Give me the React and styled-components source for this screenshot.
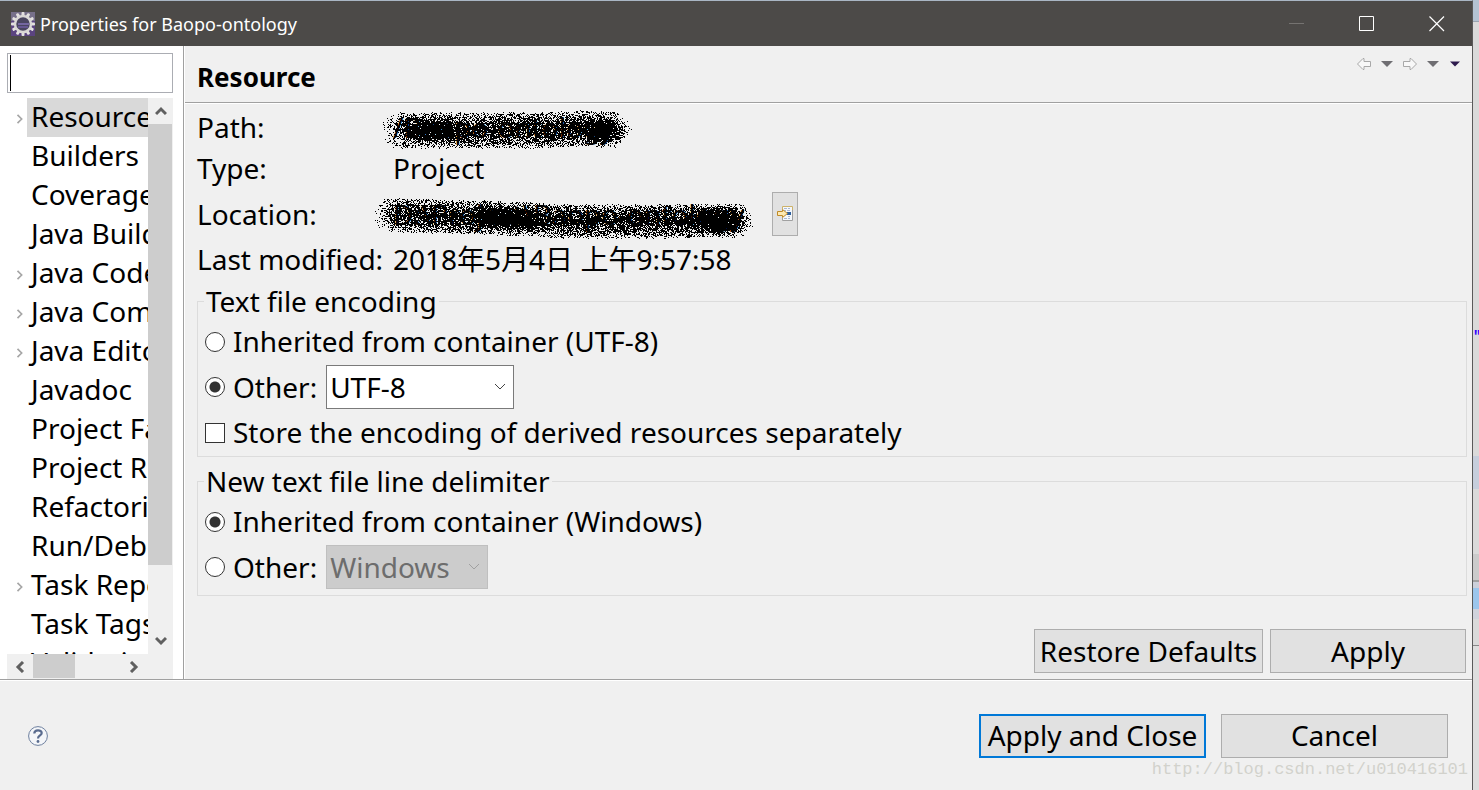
import { useState } from "react";
import styled, { createGlobalStyle } from "styled-components";

const TREE = [
  { name: "Resource", expandable: true },
  { name: "Builders" },
  { name: "Coverage" },
  { name: "Java Build Path" },
  { name: "Java Code Style", expandable: true },
  { name: "Java Compiler", expandable: true },
  { name: "Java Editor", expandable: true },
  { name: "Javadoc" },
  { name: "Project Facets" },
  { name: "Project References" },
  { name: "Refactoring History" },
  { name: "Run/Debug Settings" },
  { name: "Task Repository", expandable: true },
  { name: "Task Tags" },
  { name: "Validation" },
];

// small seeded generator so the spray looks the same on every render
function random(seed) {
  let s = seed;
  return () => {
    s = (s * 1664525 + 1013904223) % 4294967296;
    return s / 4294967296;
  };
}

// one long path of 1px specks, dense in the middle and thin at the edge
function sprayPath(stroke, radius, seed) {
  const next = random(seed);
  let d = "";
  for (let i = 0; i < stroke.length - 1; i++) {
    const [x1, y1] = stroke[i];
    const [x2, y2] = stroke[i + 1];
    const count = Math.round(Math.abs(x2 - x1) * 38);
    for (let n = 0; n < count; n++) {
      const t = next();
      const angle = next() * Math.PI * 2;
      const r = radius * Math.pow(next(), 0.7);
      const x = Math.round(x1 + (x2 - x1) * t + Math.cos(angle) * r);
      const y = Math.round(y1 + (y2 - y1) * t + Math.sin(angle) * r);
      d += `M${x} ${y}h1v1h-1z`;
    }
  }
  return d;
}

const PATH_SPRAY =
  sprayPath([[17, 20], [70, 20], [150, 20], [200, 18], [232, 19]], 18, 7) +
  sprayPath([[36, 19], [70, 20]], 10, 3) +
  sprayPath([[205, 20], [236, 20]], 12, 5);
const LOCATION_SPRAY =
  sprayPath([[18, 18], [110, 20], [200, 24], [290, 24], [366, 23]], 17, 21) +
  sprayPath([[110, 20], [160, 22]], 11, 9) +
  sprayPath([[325, 22], [368, 23]], 13, 13);

function Chevron({ direction, color = "#606060", size = 12, weight = 3 }) {
  const paths = {
    up: "M1 9l5-5 5 5",
    down: "M1 3l5 5 5-5",
    left: "M9 1L4 6l5 5",
    right: "M3 1l5 5-5 5",
  };
  return (
    <svg width={size} height={size} viewBox="0 0 12 12" fill="none" stroke={color} strokeWidth={weight}>
      <path d={paths[direction]} />
    </svg>
  );
}

function AppIcon() {
  const teeth = Array.from({ length: 12 }, (_, i) => i * 30);
  return (
    <svg width="24" height="24" viewBox="0 0 24 24">
      <rect width="24" height="24" fill="#5b4480" />
      <rect width="24" height="9" fill="#77708a" />
      {teeth.map((a) => (
        <rect key={a} x="10.500" y="0" width="3" height="5" rx="1" fill="#e4e2e0" transform={`rotate(${a} 12 12)`} />
      ))}
      <circle cx="12" cy="12" r="8" fill="#4a4560" stroke="#dad8d6" strokeWidth="2.500" />
      <path d="M7 12h11" stroke="#7466a0" strokeWidth="2" />
      <path d="M7 15h10" stroke="#655690" strokeWidth="2" />
    </svg>
  );
}

function NavArrow({ flip }) {
  return (
    <svg width="16" height="14" viewBox="0 0 16 14">
      <path
        d="M1.500 7L7 1.500h1V4.500h6.500v5H8v3H7z"
        fill="#f8f8f8"
        stroke="#a8a8a8"
        transform={flip ? "translate(16 0) scale(-1 1)" : undefined}
      />
    </svg>
  );
}

function Triangle({ color, width = 12 }) {
  return (
    <svg width={width} height="6" viewBox="0 0 12 6">
      <path d="M0 0h12L6 6z" fill={color} />
    </svg>
  );
}

function ShowInIcon() {
  return (
    <svg width="18" height="18" viewBox="0 0 18 18">
      <path d="M6.500 1.500h10v14h-10z" fill="#f4f7fb" />
      <path d="M6.500 4V1.500h10V5" fill="none" stroke="#cdb26a" />
      <path d="M16.500 5v10.500h-10V13" fill="none" stroke="#a0a0a0" />
      <path d="M8 3.500h3M12 3.500h2M8 5.500h2M11 5.500h3M8 13.500h3M12 13.500h2M12 11.500h2" stroke="#a9b8d2" />
      <path d="M11 8.500h4" stroke="#2d5f9e" strokeWidth="3" />
      <path d="M1.500 6.500h5v-2l5 4-5 4v-2h-5z" fill="#fce9b2" stroke="#c08a26" />
    </svg>
  );
}

function HelpIcon() {
  return (
    <svg width="20" height="20" viewBox="0 0 20 20" fill="none">
      <circle cx="10" cy="10" r="9.400" fill="#f4f6f9" stroke="#6d7f9e" />
      <path d="M6.300 7.500c0-4.200 7.400-4.200 7.400-.4 0 2.400-3.700 2.400-3.700 5.400" stroke="#5a6c8f" strokeWidth="2.200" />
      <circle cx="10" cy="15.500" r="1.400" fill="#5a6c8f" />
    </svg>
  );
}

function TitleBar() {
  return (
    <Title>
      <AppIcon />
      <TitleText>Properties for Baopo-ontology</TitleText>
      <WindowButton aria-label="Minimize" disabled>
        <svg width="16" height="16" stroke="#757371">
          <path d="M0 7.500h15" />
        </svg>
      </WindowButton>
      <WindowButton aria-label="Maximize">
        <svg width="16" height="16" fill="none" stroke="#ffffff">
          <path d="M.5.5h14v14H.5z" />
        </svg>
      </WindowButton>
      <WindowButton aria-label="Close">
        <svg width="16" height="16" stroke="#ffffff" strokeWidth="1.200">
          <path d="M.5.5l14.500 14.500M15 .5L.5 15" />
        </svg>
      </WindowButton>
    </Title>
  );
}

function Sidebar() {
  const [selected, setSelected] = useState("Resource");
  return (
    <Side>
      <FilterInput aria-label="Filter" placeholder=" " />
      <TreeBox>
        <TreeList>
          {TREE.map((item) => (
            <TreeRow key={item.name}>
              <Twisty>{item.expandable && <Chevron direction="right" color="#a6a6a6" size={10} weight={2} />}</Twisty>
              <TreeButton $active={item.name === selected} onClick={() => setSelected(item.name)}>
                {item.name}
              </TreeButton>
            </TreeRow>
          ))}
        </TreeList>
        <VerticalBar>
          <ScrollButton aria-label="Scroll up">
            <Chevron direction="up" />
          </ScrollButton>
          <VerticalTrack>
            <VerticalThumb />
          </VerticalTrack>
          <ScrollButton aria-label="Scroll down">
            <Chevron direction="down" />
          </ScrollButton>
        </VerticalBar>
        <HorizontalBar>
          <ScrollButton aria-label="Scroll left">
            <Chevron direction="left" />
          </ScrollButton>
          <HorizontalTrack>
            <HorizontalThumb />
          </HorizontalTrack>
          <ScrollButton aria-label="Scroll right">
            <Chevron direction="right" />
          </ScrollButton>
        </HorizontalBar>
      </TreeBox>
    </Side>
  );
}

function ResourcePage() {
  const [encoding, setEncoding] = useState("other");
  const [delimiter, setDelimiter] = useState("inherited");
  return (
    <Main>
      <PageHeader>
        <PageTitle>Resource</PageTitle>
        <HistoryBar>
          <ToolButton aria-label="Back"><NavArrow /></ToolButton>
          <ToolButton aria-label="Back history"><Triangle color="#6f6e72" /></ToolButton>
          <ToolButton aria-label="Forward"><NavArrow flip /></ToolButton>
          <ToolButton aria-label="Forward history"><Triangle color="#6f6e72" /></ToolButton>
          <ToolButton aria-label="Menu"><Triangle color="#2d1a4d" width={10} /></ToolButton>
        </HistoryBar>
      </PageHeader>

      <Content>
        <Info>
          <dt>Path:</dt>
          <dd>
            <Redacted>
              /Baopo-ontology
              <Spray width="260" height="40">
                <path d={PATH_SPRAY} />
              </Spray>
            </Redacted>
          </dd>
          <dt>Type:</dt>
          <dd>Project</dd>
          <dt>Location:</dt>
          <LocationValue>
            <Redacted>
              D:\Project\Baopo-ontology
              <Spray width="400" height="40" $wide>
                <path d={LOCATION_SPRAY} />
              </Spray>
            </Redacted>
            <ShowButton aria-label="Show in system explorer">
              <ShowInIcon />
            </ShowButton>
          </LocationValue>
          <dt>Last modified:</dt>
          <dd>2018年5月4日 上午9:57:58</dd>
        </Info>

        <Group>
          <legend>Text file encoding</legend>
          <Option>
            <Radio type="radio" name="encoding" checked={encoding === "inherited"} onChange={() => setEncoding("inherited")} />
            Inherited from container (UTF-8)
          </Option>
          <OptionRow>
            <Option>
              <Radio type="radio" name="encoding" checked={encoding === "other"} onChange={() => setEncoding("other")} />
              Other:
            </Option>
            <SelectBox $width="188px">
              <select aria-label="Text file encoding" disabled={encoding !== "other"} defaultValue="UTF-8">
                <option>UTF-8</option>
                <option>UTF-16</option>
                <option>US-ASCII</option>
              </select>
              <Chevron direction="down" color="#444444" weight={1} />
            </SelectBox>
          </OptionRow>
          <Option>
            <Check type="checkbox" />
            Store the encoding of derived resources separately
          </Option>
        </Group>

        <Group>
          <legend>New text file line delimiter</legend>
          <Option>
            <Radio type="radio" name="delimiter" checked={delimiter === "inherited"} onChange={() => setDelimiter("inherited")} />
            Inherited from container (Windows)
          </Option>
          <OptionRow>
            <Option>
              <Radio type="radio" name="delimiter" checked={delimiter === "other"} onChange={() => setDelimiter("other")} />
              Other:
            </Option>
            <SelectBox $width="162px">
              <select aria-label="Line delimiter" disabled={delimiter !== "other"} defaultValue="Windows">
                <option>Windows</option>
                <option>Unix</option>
              </select>
              <Chevron direction="down" color="#a0a0a0" weight={1} />
            </SelectBox>
          </OptionRow>
        </Group>

        <PageActions>
          <PushButton $width="229px">Restore Defaults</PushButton>
          <PushButton $width="196px">Apply</PushButton>
        </PageActions>
      </Content>
    </Main>
  );
}

export default function App() {
  return (
    <>
      <GlobalStyle />
      <Desktop>
        <Dialog>
          <TitleBar />
          <Body>
            <Sidebar />
            <ResourcePage />
          </Body>
          <Footer>
            <HelpButton aria-label="Help">
              <HelpIcon />
            </HelpButton>
            <PushButton $width="227px" $primary>Apply and Close</PushButton>
            <PushButton $width="227px">Cancel</PushButton>
            <Watermark>http://blog.csdn.net/u010416101</Watermark>
          </Footer>
        </Dialog>
        <Backdrop>
          <CodeBit>"</CodeBit>
        </Backdrop>
      </Desktop>
    </>
  );
}

// Styled Components

const GlobalStyle = createGlobalStyle`
  * {
    box-sizing: border-box;
  }
  body {
    margin: 0;
    font-family: "Noto Sans", "Noto Sans CJK SC", sans-serif;
    font-size: 28px;
    line-height: 35px;
    color: #000000;
  }
  button, input, select {
    font: inherit;
    color: inherit;
    margin: 0;
    padding: 0;
    border-radius: 0;
    outline: none;
  }
  svg {
    display: block;
    flex-shrink: 0;
  }
`;

const Desktop = styled.div`
  display: flex;
  height: 100vh;
  overflow: hidden;
`;

const Dialog = styled.div`
  flex: 1;
  min-width: 0;
  display: flex;
  flex-direction: column;
  background-color: #f0f0f0;
  border-top: 1px solid #a9b6c4;
  border-right: 1px solid #5a5a5a;
`;

const Backdrop = styled.div`
  width: 6px;
  padding-top: 328px;
  overflow: hidden;
  background: linear-gradient(
    #b4c3d3 0 21px,
    #9aa4b0 21px 22px,
    #dadada 22px 456px,
    #c6cedc 456px 489px,
    #dadada 489px 554px,
    #cbcbcb 554px 580px,
    #a0a0a0 580px 582px,
    #ccd0da 582px 588px,
    #9cc6ec 588px 609px,
    #d0d3dc 609px 619px,
    #dadada 619px 645px,
    #888888 645px 646px,
    #dedede 646px
  );
`;

const CodeBit = styled.span`
  display: block;
  font-family: "Liberation Mono", monospace;
  font-size: 14px;
  font-weight: 700;
  line-height: 18px;
  color: #2a00ff;
`;

const Title = styled.header`
  height: 45px;
  flex-shrink: 0;
  display: flex;
  align-items: center;
  padding-left: 11px;
  background-color: #4c4a48;
  color: #ffffff;
`;

const TitleText = styled.h1`
  flex: 1;
  margin: 0;
  padding-left: 5px;
  font-size: 18px;
  font-weight: 400;
  line-height: 24px;
`;

const WindowButton = styled.button`
  width: 70px;
  height: 45px;
  display: flex;
  align-items: center;
  justify-content: center;
  border: none;
  background: none;
`;

const Body = styled.div`
  flex: 1;
  min-height: 0;
  display: flex;
  border-bottom: 1px solid #a0a0a0;
`;

const Side = styled.nav`
  width: 184px;
  flex-shrink: 0;
  display: flex;
  flex-direction: column;
  gap: 5px;
  padding: 7px 10px 0 7px;
  background-color: #ffffff;
  border-right: 1px solid #a0a0a0;
`;

const FilterInput = styled.input`
  width: 100%;
  height: 40px;
  padding: 0 2px;
  background-color: #ffffff;
  border: 1px solid #abadb3;

  /* resting caret while the filter is empty */
  &:placeholder-shown {
    background: linear-gradient(#000000, #000000) 2px 1px / 1px 36px no-repeat #ffffff;
    caret-color: transparent;
  }
`;

const TreeBox = styled.div`
  flex: 1;
  min-height: 0;
  display: grid;
  grid-template-columns: minmax(0, 1fr) 25px;
  grid-template-rows: minmax(0, 1fr) 25px;
`;

const TreeList = styled.ul`
  margin: 0;
  padding: 0;
  list-style: none;
  overflow: hidden;
`;

const TreeRow = styled.li`
  display: flex;
  height: 39px;
`;

const Twisty = styled.span`
  width: 20px;
  flex-shrink: 0;
  display: flex;
  align-items: center;
  justify-content: flex-end;
  padding: 3px 2px 0 0;
`;

const TreeButton = styled.button`
  padding: 0 4px 2px;
  border: none;
  background-color: ${(props) => (props.$active ? "#d9d9d9" : "transparent")};
  white-space: nowrap;
`;

const VerticalBar = styled.div`
  display: flex;
  flex-direction: column;
  background-color: #f0f0f0;
`;

const HorizontalBar = styled.div`
  grid-column: 1 / 3;
  display: flex;
  padding-right: 26px;
  background-color: #f0f0f0;
`;

const ScrollButton = styled.button`
  width: 26px;
  height: 26px;
  display: flex;
  align-items: center;
  justify-content: center;
  border: none;
  background: none;
`;

const VerticalTrack = styled.div`
  flex: 1;
  display: grid;
  grid-template-rows: 7fr 1fr;
`;

const VerticalThumb = styled.div`
  width: 24px;
  background-color: #cdcdcd;
`;

const HorizontalTrack = styled.div`
  flex: 1;
`;

const HorizontalThumb = styled.div`
  width: 42px;
  height: 24px;
  background-color: #cdcdcd;
`;

const Main = styled.main`
  flex: 1;
  min-width: 0;
  display: flex;
  flex-direction: column;
  border-left: 1px solid #ffffff;
`;

const PageHeader = styled.div`
  display: flex;
  justify-content: space-between;
  align-items: flex-start;
  height: 57px;
  padding: 10px 10px 0 12px;
  border-bottom: 1px solid #a0a0a0;
  box-shadow: 0 1px 0 #ffffff;
`;

const PageTitle = styled.h2`
  margin: 0;
  padding-top: 3px;
  font-size: 26px;
  font-weight: 700;
  line-height: 36px;
`;

const HistoryBar = styled.div`
  display: flex;
  align-items: center;
  gap: 8px;
`;

const ToolButton = styled.button`
  min-width: 14px;
  height: 16px;
  display: flex;
  align-items: center;
  justify-content: center;
  border: none;
  background: none;
`;

const Content = styled.div`
  flex: 1;
  display: flex;
  flex-direction: column;
  padding: 7px 5px 6px 12px;
`;

const Info = styled.dl`
  display: grid;
  grid-template-columns: 196px 1fr;
  row-gap: 6px;
  align-items: center;
  margin: 0 0 7px;
  white-space: nowrap;

  dd {
    margin: 0;
  }
`;

const LocationValue = styled.dd`
  display: flex;
  align-items: center;
  gap: 28px;
`;

const Redacted = styled.span`
  position: relative;
  display: block;
  width: fit-content;
`;

/* lies over the text it hides */
const Spray = styled.svg`
  position: absolute;
  top: 0;
  left: ${(props) => (props.$wide ? "-22px" : "-12px")};
  overflow: visible;
`;

const ShowButton = styled.button`
  width: 26px;
  height: 44px;
  display: flex;
  align-items: center;
  justify-content: center;
  border: 1px solid #adadad;
  background-color: #e1e1e1;
`;

const Group = styled.fieldset`
  display: flex;
  flex-direction: column;
  gap: 6px;
  margin: 0 0 7px;
  padding: 5px 7px 6px;
  min-width: 0;
  border: 1px solid #dcdcdc;

  legend {
    margin-left: -1px;
    padding: 0 2px;
  }
`;

const Option = styled.label`
  display: flex;
  align-items: center;
  gap: 8px;
`;

const OptionRow = styled.div`
  display: flex;
  align-items: center;
  gap: 9px;
`;

const Radio = styled.input`
  appearance: none;
  width: 20px;
  height: 20px;
  border: 1px solid #333333;
  border-radius: 50%;
  background-color: #ffffff;

  &:checked {
    background-image: radial-gradient(circle, #333333 0 5px, #ffffff 6px);
  }
`;

const Check = styled.input`
  appearance: none;
  width: 20px;
  height: 20px;
  border: 1px solid #333333;
  background-color: #ffffff;

  &:checked {
    box-shadow: inset 0 0 0 4px #ffffff;
    background-color: #333333;
  }
`;

const SelectBox = styled.span`
  display: grid;
  align-items: center;
  width: ${(props) => props.$width};

  select {
    grid-area: 1 / 1;
    appearance: none;
    width: 100%;
    height: 44px;
    padding: 0 3px;
    border: 1px solid #7a7a7a;
    background-color: #ffffff;
  }

  select:disabled {
    opacity: 1;
    color: #6d6d6d;
    border-color: #bfbfbf;
    background-color: #cccccc;
  }

  svg {
    grid-area: 1 / 1;
    justify-self: end;
    margin-right: 8px;
    pointer-events: none;
  }
`;

const PushButton = styled.button`
  width: ${(props) => props.$width};
  height: 44px;
  border: ${(props) => (props.$primary ? "2px solid #0078d7" : "1px solid #adadad")};
  background-color: #e1e1e1;
  text-align: center;
  white-space: nowrap;
`;

const PageActions = styled.div`
  display: flex;
  justify-content: flex-end;
  gap: 7px;
  margin-top: auto;
  padding-right: 1px;
`;

const Footer = styled.footer`
  position: relative;
  height: 110px;
  flex-shrink: 0;
  display: flex;
  align-items: center;
  gap: 15px;
  padding: 0 24px 0 28px;
  border-top: 1px solid #ffffff;
`;

const HelpButton = styled.button`
  margin-right: auto;
  border: none;
  background: none;
`;

/* printed over the corner of the dialog */
const Watermark = styled.span`
  position: absolute;
  right: 4px;
  bottom: 8px;
  font-family: "Liberation Mono", monospace;
  font-size: 17px;
  line-height: 24px;
  color: #d2d2cc;
`;
